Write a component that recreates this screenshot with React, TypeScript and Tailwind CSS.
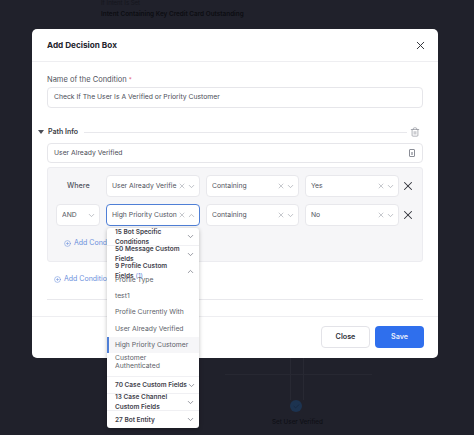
import { ChevronDown, ChevronUp, Check, CirclePlus, Trash2, X } from "lucide-react";

function Select({
  value,
  open,
  clear = true,
  className,
}: {
  value: string;
  open?: boolean;
  clear?: boolean;
  className: string;
}) {
  return (
    <div
      className={`flex h-[22px] items-center rounded-[4px] border bg-white pl-[5px] pr-[3px] ${
        open ? "border-[#4f7fd6]" : "border-[#e8e8ec]"
      } ${className}`}
    >
      <span className="min-w-0 flex-1 overflow-hidden whitespace-nowrap text-[#50535d]">{value}</span>
      {clear && <X className="size-[8px] shrink-0 text-[#a9acb4]" strokeWidth={2} />}
      {open ? (
        <ChevronUp className="ml-[1px] size-[9px] shrink-0 text-[#a9acb4]" strokeWidth={2} />
      ) : (
        <ChevronDown className="ml-[1px] size-[9px] shrink-0 text-[#a9acb4]" strokeWidth={2} />
      )}
    </div>
  );
}

function Group({
  label,
  h,
  open,
  count,
  border,
  nowrap,
}: {
  label: string;
  h: string;
  open?: boolean;
  count?: boolean;
  border?: boolean;
  nowrap?: boolean;
}) {
  return (
    <div className={`flex items-center pl-[8px] pr-[4px] ${h} ${border ? "border-t border-[#f0f0f3]" : ""}`}>
      <span
        className={`text-[6.5px] font-semibold leading-[10px] text-[#3f424c] ${
          nowrap ? "whitespace-nowrap" : "w-[68px]"
        }`}
      >
        {label}
        {count && <span className="font-normal text-[#5f86d8]"> (1)</span>}
      </span>
      <span className="flex-1" />
      {open ? (
        <ChevronUp className="size-[9px] shrink-0 text-[#777a84]" strokeWidth={2} />
      ) : (
        <ChevronDown className="size-[9px] shrink-0 text-[#777a84]" strokeWidth={2} />
      )}
    </div>
  );
}

function Option({ label, active, className = "h-[16px]" }: { label: string; active?: boolean; className?: string }) {
  return (
    <div
      className={`flex leading-[8px] text-[#5c5f69] ${className} ${
        active ? "border-l-2 border-[#4f7fd6] bg-[#f6f6f8] pl-[6px]" : "pl-[8px]"
      }`}
    >
      {label}
    </div>
  );
}

export default function App() {
  return (
    <div className="relative h-[435px] w-[474px] overflow-hidden bg-[#20212b] font-['Inter',sans-serif] text-[6.8px]">
      {/* flow canvas behind the dialog */}
      <div className="absolute left-[101px] top-0 whitespace-nowrap text-[6px] leading-[6px] text-[#15161d]">
        If Intent Is Set
      </div>
      <div className="absolute left-[101px] top-[10px] whitespace-nowrap text-[6.4px] font-semibold text-[#0c0d12]">
        Intent Containing Key Credit Card Outstanding
      </div>
      <div className="absolute left-[290px] top-[358px] h-[42px] w-[14px] border-x border-[#282933]" />
      <div className="absolute left-[225px] top-[374px] h-px w-[147px] bg-[#272832]" />
      <div className="absolute left-[290px] top-[400px] flex size-[12px] items-center justify-center rounded-full bg-[#1c3350]">
        <Check className="size-[7px] text-[#142238]" strokeWidth={2} />
      </div>
      <div className="absolute left-[272px] top-[418px] whitespace-nowrap text-[6.3px] font-medium text-[#0f1016]">
        Set User Verified
      </div>

      <div className="absolute left-[32px] top-[29px] flex h-[329px] w-[406px] flex-col rounded-[5px] bg-white">
        <div className="flex h-[33px] shrink-0 items-center justify-between border-b border-[#eeeef1] pl-[15px] pr-[11px]">
          <span className="text-[8.2px] font-bold text-[#23252d]">Add Decision Box</span>
          <X className="size-[13px] text-[#30323a]" strokeWidth={1.8} />
        </div>

        <div className="flex-1 px-[15px] pt-[13px]">
          <div className="mb-[3px] text-[7.5px] leading-[9px] text-[#50535d]">
            Name of the Condition <span className="text-[6px] text-[#e0566a]">*</span>
          </div>
          <div className="flex h-[21px] items-center rounded-[4px] border border-[#e6e6ea] px-[6px] text-[#4a4d57]">
            Check If The User Is A Verified or Priority Customer
          </div>

          <div className="relative mt-[19px] flex h-[10px] items-center pl-[1px]">
            <span className="absolute left-[-9px] size-0 border-x-[3px] border-t-[4px] border-x-transparent border-t-[#4a4d57]" />
            <span className="text-[7px] font-semibold text-[#3a3c45]">Path Info</span>
            <div className="ml-[6px] h-px flex-1 bg-[#e8e8ec]" />
            <Trash2 className="ml-[3px] mr-[3px] size-[10px] text-[#8a8d96]" strokeWidth={1.6} />
          </div>

          <div className="mt-[6px] flex h-[20px] items-center justify-between rounded-[4px] border border-[#e6e6ea] pl-[6px] pr-[7px] text-[#4a4d57]">
            User Already Verified
            <span className="flex h-[8px] w-[6px] items-center justify-center rounded-[1px] border border-[#8a8d96]">
              <span className="h-[3px] w-[2px] bg-[#b5b7bd]" />
            </span>
          </div>

          <div className="mt-[4px] h-[95px] rounded-[3px] border border-[#ececf0] bg-[#f6f6f8] pt-[7px]">
            <div className="flex items-center">
              <span className="w-[58px] pl-[19px] text-[7.2px] font-medium text-[#50535d]">Where</span>
              <Select className="w-[94px]" value="User Already Verifie" />
              <Select className="ml-[6px] w-[93px]" value="Containing" />
              <Select className="ml-[6px] w-[94px]" value="Yes" />
              <X className="ml-[2px] size-[14px] text-[#30323a]" strokeWidth={1.8} />
            </div>
            <div className="mt-[7px] flex items-center">
              <Select className="ml-[8px] mr-[6px] w-[44px]" value="AND" clear={false} />
              <Select className="w-[94px]" value="High Priority Custon" open />
              <Select className="ml-[6px] w-[93px]" value="Containing" />
              <Select className="ml-[6px] w-[94px]" value="No" />
              <X className="ml-[2px] size-[14px] text-[#30323a]" strokeWidth={1.8} />
            </div>
            <div className="mt-[12px] flex items-center gap-[3px] pl-[16px] text-[7px] text-[#6b90dc]">
              <CirclePlus className="size-[7px]" strokeWidth={1.8} />
              Add Condition
            </div>
          </div>

          <div className="mt-[12px] flex items-center gap-[3px] pl-[7px] text-[7px] text-[#6b90dc]">
            <CirclePlus className="size-[7px]" strokeWidth={1.8} />
            Add Condition Group
          </div>
          <div className="mt-[14px] h-px bg-[#e8e8ec]" />
        </div>

        <div className="flex h-[42px] shrink-0 items-start justify-end gap-[5px] border-t border-[#eeeef1] pr-[14px] pt-[9px] text-[7.2px] font-semibold">
          <div className="flex h-[22px] w-[49px] items-center justify-center rounded-[4px] border border-[#e3e3e8] text-[#30323a]">
            Close
          </div>
          <div className="flex h-[22px] w-[49px] items-center justify-center rounded-[4px] bg-[#2f6fed] text-[#e8eefb]">
            Save
          </div>
        </div>
      </div>

      {/* open select menu */}
      <div className="absolute left-[107px] top-[228px] w-[92px] rounded-[3px] bg-white shadow-[0_1px_4px_rgba(0,0,0,0.25)]">
        <Group label="15 Bot Specific Conditions" h="h-[17px]" />
        <Group label="50 Message Custom Fields" h="h-[17px]" border />
        <Group label="9 Profile Custom Fields" h="h-[18px]" open count />
        <Option label="Profile Type" className="-mt-[8px] h-[16px] items-center" />
        <Option label="test1" className="h-[16px] items-center" />
        <Option label="Profile Currently With" className="h-[16px] items-center" />
        <Option label="User Already Verified" className="h-[17px] items-center" />
        <Option label="High Priority Customer" active className="h-[16px] items-center" />
        <Option label="Customer Authenticated" className="h-[23px] w-[60px] items-start pt-[1px]" />
        <Group label="70 Case Custom Fields" h="h-[17px]" border nowrap />
        <Group label="13 Case Channel Custom Fields" h="h-[17px]" border />
        <Group label="27 Bot Entity" h="h-[18px]" border />
      </div>
    </div>
  );
}
